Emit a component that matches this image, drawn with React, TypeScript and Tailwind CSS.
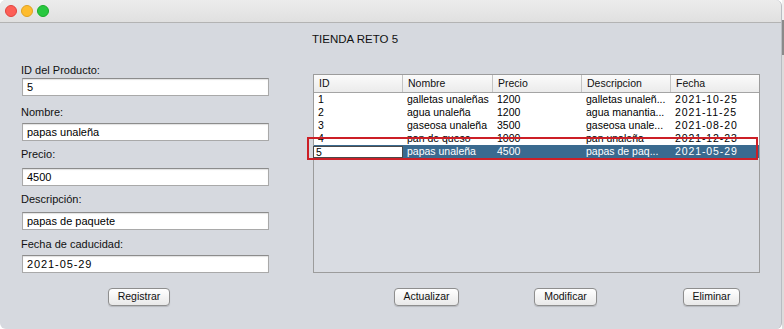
import React from "react";

const rows: string[][] = [
  ["1", "galletas unaleñas", "1200", "galletas unaleñ...", "2021-10-25"],
  ["2", "agua unaleña", "1200", "agua manantia...", "2021-11-25"],
  ["3", "gaseosa unaleña", "3500", "gaseosa unale...", "2021-08-20"],
  ["4", "pan de queso", "1000", "pan unaleña", "2021-12-23"],
];

function Field({ label, value, labelMt, inputMt, date }: { label: string; value: string; labelMt: string; inputMt: string; date?: boolean }) {
  return (
    <>
      <div className={`${labelMt} h-[14px] leading-[14px] text-[11px] text-[#111]`}>{label}</div>
      <div
        className={`${inputMt} ml-[1px] h-[18px] w-[247px] border border-[#a9a9a9] border-t-[#8c8c8c] bg-white pl-[4px] text-[11px] leading-[16px] text-black shadow-[inset_0_1px_1px_rgba(0,0,0,0.12)] ${date ? "tracking-[0.9px]" : ""}`}
      >
        {value}
      </div>
    </>
  );
}

function Btn({ label, w, ml }: { label: string; w: string; ml: string }) {
  return (
    <div
      className={`${w} ${ml} flex h-[18px] items-center justify-center rounded-[4px] border border-[#8e8e8e] bg-gradient-to-b from-white to-[#e9e9e9] text-[10.5px] text-[#111] shadow-[0_1px_1px_rgba(0,0,0,0.15)]`}
    >
      {label}
    </div>
  );
}

export default function App() {
  return (
    <div className="flex h-[329px] w-[784px] bg-white font-['Liberation_Sans',Arial,sans-serif]">
      <div className="flex h-[329px] w-[782px] flex-col overflow-hidden rounded-[6px] border-r border-[#b9bcc2] bg-[#d6d9df]">
        {/* title bar */}
        <div className="flex h-[23px] shrink-0 items-center gap-[4.5px] border-b border-[#b3b3b3] bg-gradient-to-b from-[#ececec] to-[#e0e0e0] pl-[5px]">
          <div className="h-[11.5px] w-[11.5px] rounded-full border border-[#e0443e] bg-[#fd5f57]" />
          <div className="h-[11.5px] w-[11.5px] rounded-full border border-[#dea123] bg-[#febc2e]" />
          <div className="h-[11.5px] w-[11.5px] rounded-full border border-[#1aab29] bg-[#28c840]" />
        </div>

        {/* title */}
        <div className="mt-[9px] h-[14px] pl-[312px] text-[11.5px] leading-[14px] text-[#111]">TIENDA RETO 5</div>

        <div className="flex items-start">
          {/* left form */}
          <div className="ml-[21px] flex w-[248px] flex-col">
            <Field label="ID del Producto:" value="5" labelMt="mt-[17px]" inputMt="mt-[1px]" />
            <Field label="Nombre:" value="papas unaleña" labelMt="mt-[9px]" inputMt="mt-[4px]" />
            <Field label="Precio:" value="4500" labelMt="mt-[6px]" inputMt="mt-[7px]" />
            <Field label="Descripción:" value="papas de paquete" labelMt="mt-[6px]" inputMt="mt-[6px]" />
            <Field label="Fecha de caducidad:" value="2021-05-29" labelMt="mt-[7px]" inputMt="mt-[4px]" date />
            <div className="mt-[15px] flex">
              <Btn label="Registrar" w="w-[62px]" ml="ml-[87px]" />
            </div>
          </div>

          {/* right table */}
          <div className="ml-[44px] mt-[28px] flex w-[447px] flex-col">
            <div className="relative h-[199px] w-[447px] border border-[#9c9c9c] bg-[#d9dce2]">
              <div className="grid h-[18px] grid-cols-[89px_90px_89px_89px_88px] border-b border-[#a4a4a4] bg-gradient-to-b from-[#fbfbfb] to-[#ebebeb] text-[10.5px] leading-[17px] text-[#111]">
                {["ID", "Nombre", "Precio", "Descripcion", "Fecha"].map((h, i) => (
                  <div key={h} className={`pl-[5px] ${i < 4 ? "border-r border-[#c4c4c4]" : ""}`}>
                    {h}
                  </div>
                ))}
              </div>
              {rows.map((r) => (
                <div key={r[0]} className="grid h-[13px] grid-cols-[89px_90px_89px_89px_88px] bg-white text-[10.5px] leading-[13px] text-black">
                  {r.map((c, i) => (
                    <div key={i} className={`overflow-hidden whitespace-nowrap pl-[4px] ${i === 4 ? "tracking-[0.9px]" : ""}`}>
                      {c}
                    </div>
                  ))}
                </div>
              ))}
              <div className="grid h-[13px] grid-cols-[89px_90px_89px_89px_88px] bg-[#3a6a8f] text-[10.5px] leading-[13px] text-white">
                <div className="ml-[-1px] mt-[1px] h-[12px] border border-[#4a4a4a] bg-white pl-[2px] leading-[10px] text-black">5</div>
                <div className="overflow-hidden whitespace-nowrap pl-[4px]">papas unaleña</div>
                <div className="overflow-hidden whitespace-nowrap pl-[4px]">4500</div>
                <div className="overflow-hidden whitespace-nowrap pl-[4px]">papas de paq...</div>
                <div className="overflow-hidden whitespace-nowrap pl-[4px] tracking-[0.9px]">2021-05-29</div>
              </div>
              {/* focus ring */}
              <div className="pointer-events-none absolute left-[-7px] top-[62px] h-[23px] w-[451px] border-2 border-solid border-[#cc1f26]" />
            </div>
            <div className="mt-[15px] flex">
              <Btn label="Actualizar" w="w-[65px]" ml="ml-[81px]" />
              <Btn label="Modificar" w="w-[63px]" ml="ml-[75px]" />
              <Btn label="Eliminar" w="w-[57px]" ml="ml-[86px]" />
            </div>
          </div>
        </div>
      </div>
      <div className="flex w-[2px] flex-col">
        <div className="h-[20px] bg-[#f0f0f0]" />
        <div className="h-[35px] bg-[#8a8a8a]" />
        <div className="flex-1 bg-[#dcdcdc]" />
      </div>
    </div>
  );
}
